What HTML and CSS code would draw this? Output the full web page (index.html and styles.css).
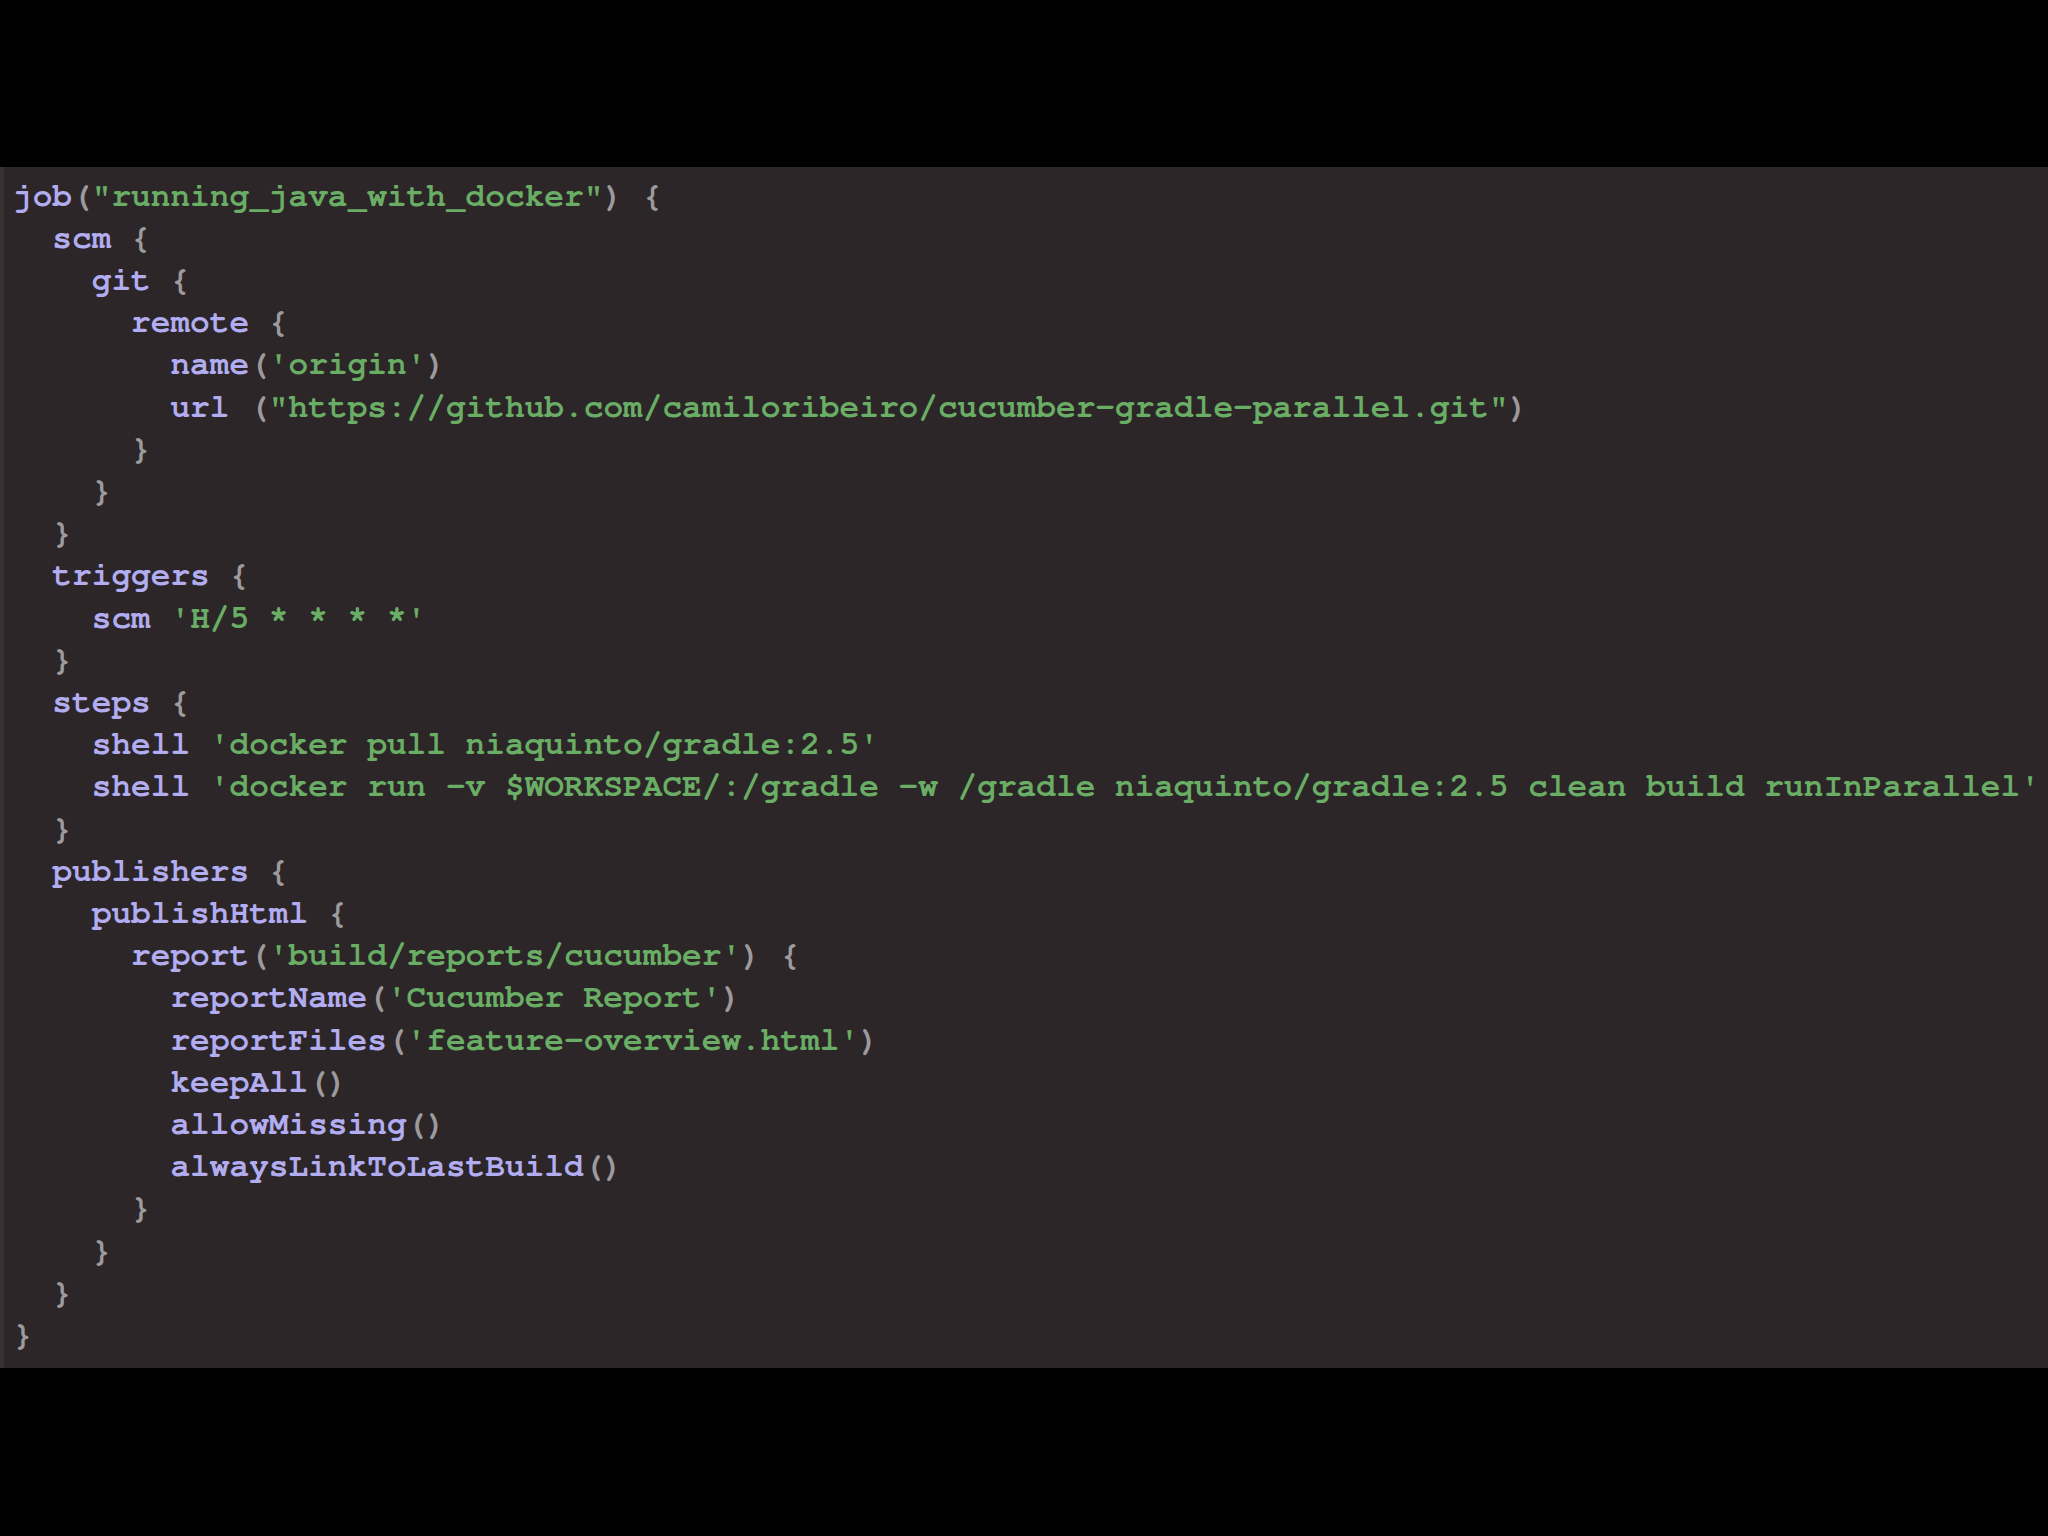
FILE: index.html
```html
<!DOCTYPE html>
<html>
<head>
<meta charset="utf-8">
<link rel="stylesheet" href="styles.css">
</head>
<body>
<div class="screen">
<div class="top-bar"></div>
<div class="code-panel">
<pre class="code"><span class="k">job</span><span class="p">(</span><span class="s">"running_java_with_docker"</span><span class="p">) {</span>
  <span class="k">scm</span> <span class="p">{</span>
    <span class="k">git</span> <span class="p">{</span>
      <span class="k">remote</span> <span class="p">{</span>
        <span class="k">name</span><span class="p">(</span><span class="s">'origin'</span><span class="p">)</span>
        <span class="k">url</span> <span class="p">(</span><span class="s">"https://github.com/camiloribeiro/cucumber-gradle-parallel.git"</span><span class="p">)</span>
      <span class="p">}</span>
    <span class="p">}</span>
  <span class="p">}</span>
  <span class="k">triggers</span> <span class="p">{</span>
    <span class="k">scm</span> <span class="s">'H/5 * * * *'</span>
  <span class="p">}</span>
  <span class="k">steps</span> <span class="p">{</span>
    <span class="k">shell</span> <span class="s">'docker pull niaquinto/gradle:2.5'</span>
    <span class="k">shell</span> <span class="s">'docker run -v $WORKSPACE/:/gradle -w /gradle niaquinto/gradle:2.5 clean build runInParallel'</span>
  <span class="p">}</span>
  <span class="k">publishers</span> <span class="p">{</span>
    <span class="k">publishHtml</span> <span class="p">{</span>
      <span class="k">report</span><span class="p">(</span><span class="s">'build/reports/cucumber'</span><span class="p">) {</span>
        <span class="k">reportName</span><span class="p">(</span><span class="s">'Cucumber Report'</span><span class="p">)</span>
        <span class="k">reportFiles</span><span class="p">(</span><span class="s">'feature-overview.html'</span><span class="p">)</span>
        <span class="k">keepAll</span><span class="p">()</span>
        <span class="k">allowMissing</span><span class="p">()</span>
        <span class="k">alwaysLinkToLastBuild</span><span class="p">()</span>
      <span class="p">}</span>
    <span class="p">}</span>
  <span class="p">}</span>
<span class="p">}</span></pre>
</div>
<div class="bottom-bar"></div>
</div>
</body>
</html>
```

FILE: styles.css
```css
html, body {
  margin: 0;
  padding: 0;
  background: #000;
}

.screen {
  width: 2048px;
  height: 1536px;
  display: flex;
  flex-direction: column;
  background: #000;
  overflow: hidden;
}

.top-bar {
  height: 167px;
  flex: 0 0 auto;
}

.code-panel {
  height: 1201px;
  flex: 0 0 auto;
  background: #2c2629;
  border-left: 4px solid #373134;
  box-sizing: border-box;
  overflow: hidden;
}

.bottom-bar {
  flex: 1 1 auto;
}

.code {
  margin: 0;
  padding: 8.5px 0 0 9px;
  font-family: "Nimbus Mono PS", "FreeMono", "Liberation Mono", "Courier New", monospace;
  font-weight: bold;
  font-size: 32.8px;
  line-height: 42.2px;
  color: #9c9a9c;
  white-space: pre;
}

.k {
  color: #b2acf0;
}

.s {
  color: #69ae64;
}

.p {
  color: #9c9a9c;
}
```
